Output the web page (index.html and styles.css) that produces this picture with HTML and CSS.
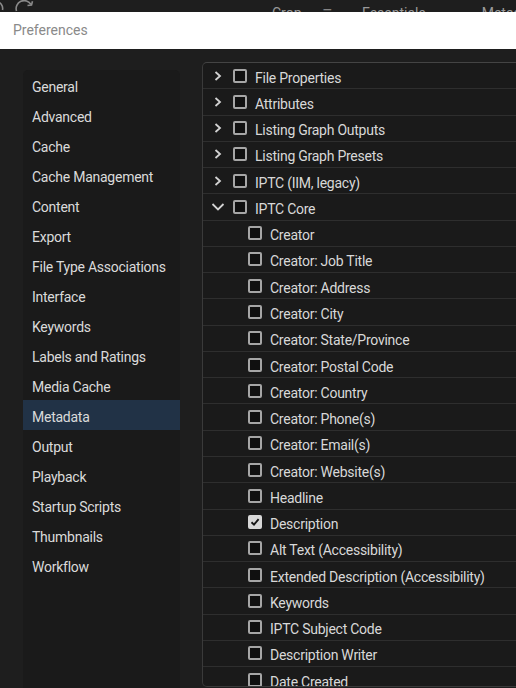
FILE: index.html
```html
<!DOCTYPE html>
<html lang="en">
<head>
<meta charset="utf-8">
<title>Preferences</title>
<link rel="stylesheet" href="styles.css">
</head>
<body>
<div class="topstrip">
  <svg class="undo" width="40" height="12" viewBox="0 0 40 12">
    <path d="M-4 1.5 A7 7 0 0 1 2.5 10" fill="none" stroke="#8a8a8a" stroke-width="1.6"/>
    <path d="M16.5 11 A8 8 0 0 1 31 4.5" fill="none" stroke="#8a8a8a" stroke-width="1.6"/>
    <path d="M27.5 5.5 L31.5 5 L32.5 1.2" fill="none" stroke="#8a8a8a" stroke-width="1.6"/>
  </svg>
  <span class="tool t-crop">Crop</span>
  <span class="tool t-menu">≡</span>
  <span class="tool t-ess">Essentials</span>
  <span class="tool t-meta">Metadata</span>
</div>
<div class="titlebar">Preferences</div>
<div class="main">
  <nav class="sidebar">
    <div class="nav-item">General</div>
    <div class="nav-item">Advanced</div>
    <div class="nav-item">Cache</div>
    <div class="nav-item">Cache Management</div>
    <div class="nav-item">Content</div>
    <div class="nav-item">Export</div>
    <div class="nav-item">File Type Associations</div>
    <div class="nav-item">Interface</div>
    <div class="nav-item">Keywords</div>
    <div class="nav-item">Labels and Ratings</div>
    <div class="nav-item">Media Cache</div>
    <div class="nav-item selected">Metadata</div>
    <div class="nav-item">Output</div>
    <div class="nav-item">Playback</div>
    <div class="nav-item">Startup Scripts</div>
    <div class="nav-item">Thumbnails</div>
    <div class="nav-item">Workflow</div>
  </nav>
  <div class="listpanel">
    <div class="row"><span class="chev"><svg width="8" height="10" viewBox="0 0 8 10"><path d="M1.5 1 L6 5 L1.5 9" fill="none" stroke="#d2d2d2" stroke-width="1.8"/></svg></span><span class="cb"></span><span class="label">File Properties</span></div>
    <div class="row"><span class="chev"><svg width="8" height="10" viewBox="0 0 8 10"><path d="M1.5 1 L6 5 L1.5 9" fill="none" stroke="#d2d2d2" stroke-width="1.8"/></svg></span><span class="cb"></span><span class="label">Attributes</span></div>
    <div class="row"><span class="chev"><svg width="8" height="10" viewBox="0 0 8 10"><path d="M1.5 1 L6 5 L1.5 9" fill="none" stroke="#d2d2d2" stroke-width="1.8"/></svg></span><span class="cb"></span><span class="label">Listing Graph Outputs</span></div>
    <div class="row"><span class="chev"><svg width="8" height="10" viewBox="0 0 8 10"><path d="M1.5 1 L6 5 L1.5 9" fill="none" stroke="#d2d2d2" stroke-width="1.8"/></svg></span><span class="cb"></span><span class="label">Listing Graph Presets</span></div>
    <div class="row"><span class="chev"><svg width="8" height="10" viewBox="0 0 8 10"><path d="M1.5 1 L6 5 L1.5 9" fill="none" stroke="#d2d2d2" stroke-width="1.8"/></svg></span><span class="cb"></span><span class="label">IPTC (IIM, legacy)</span></div>
    <div class="row"><span class="chev"><svg width="14" height="8" viewBox="0 0 14 8"><path d="M1.5 1 L7 6.5 L12.5 1" fill="none" stroke="#d2d2d2" stroke-width="1.8"/></svg></span><span class="cb"></span><span class="label">IPTC Core</span></div>
    <div class="row child"><span class="cb"></span><span class="label">Creator</span></div>
    <div class="row child"><span class="cb"></span><span class="label">Creator: Job Title</span></div>
    <div class="row child"><span class="cb"></span><span class="label">Creator: Address</span></div>
    <div class="row child"><span class="cb"></span><span class="label">Creator: City</span></div>
    <div class="row child"><span class="cb"></span><span class="label">Creator: State/Province</span></div>
    <div class="row child"><span class="cb"></span><span class="label">Creator: Postal Code</span></div>
    <div class="row child"><span class="cb"></span><span class="label">Creator: Country</span></div>
    <div class="row child"><span class="cb"></span><span class="label">Creator: Phone(s)</span></div>
    <div class="row child"><span class="cb"></span><span class="label">Creator: Email(s)</span></div>
    <div class="row child"><span class="cb"></span><span class="label">Creator: Website(s)</span></div>
    <div class="row child"><span class="cb"></span><span class="label">Headline</span></div>
    <div class="row child"><span class="cb checked"><svg width="10" height="10" viewBox="0 0 10 10"><path d="M1.5 5.2 L4 7.6 L8.6 2.2" fill="none" stroke="#151515" stroke-width="1.9"/></svg></span><span class="label">Description</span></div>
    <div class="row child"><span class="cb"></span><span class="label">Alt Text (Accessibility)</span></div>
    <div class="row child"><span class="cb"></span><span class="label">Extended Description (Accessibility)</span></div>
    <div class="row child"><span class="cb"></span><span class="label">Keywords</span></div>
    <div class="row child"><span class="cb"></span><span class="label">IPTC Subject Code</span></div>
    <div class="row child"><span class="cb"></span><span class="label">Description Writer</span></div>
    <div class="row child"><span class="cb"></span><span class="label">Date Created</span></div>
  </div>
</div>
</body>
</html>
```

FILE: styles.css
```css
html, body {
  margin: 0;
  padding: 0;
}
body {
  width: 516px;
  height: 688px;
  overflow: hidden;
  background: #1e1e1e;
  font-family: Roboto, "Noto Sans", sans-serif;
  font-size: 14px;
  color: #d8d8d8;
}
.topstrip {
  height: 12px;
  overflow: hidden;
  display: flex;
  align-items: flex-start;
  background: #1e1e1e;
  color: #9a9a9a;
  font-size: 14px;
  line-height: 16px;
}
.undo {
  flex: none;
}
.tool {
  flex: none;
  padding-top: 5px;
  white-space: nowrap;
}
.t-crop { margin-left: 232px; }
.t-menu { margin-left: 21px; font-size: 16px; }
.t-ess { margin-left: 30px; }
.t-meta { margin-left: 56px; }
.titlebar {
  height: 37px;
  background: #ffffff;
  color: #8a8a8a;
  font-size: 14px;
  line-height: 37px;
  padding-left: 13px;
}
.main {
  display: flex;
  align-items: flex-start;
  padding-left: 23px;
}
.sidebar {
  flex: none;
  width: 157px;
  margin-top: 21px;
  height: 640px;
  background: #1a1a1a;
  border-radius: 5px 5px 0 0;
}
.nav-item {
  height: 30px;
  line-height: 26px;
  padding-left: 9px;
  padding-top: 4px;
  box-sizing: border-box;
  white-space: nowrap;
  letter-spacing: -0.25px;
  color: #dadada;
}
.nav-item.selected {
  background: #213246;
}
.listpanel {
  flex: none;
  margin-left: 22px;
  margin-top: 13px;
  width: 340px;
  height: 625px;
  box-sizing: border-box;
  border: 1px solid #3a3a3a;
  border-top-color: #444444;
  border-radius: 5px;
  background: #1a1a1a;
  overflow: hidden;
}
.row {
  height: 26.27px;
  box-sizing: border-box;
  border-bottom: 1px solid #2e2e2e;
  display: flex;
  align-items: center;
  padding-left: 8px;
  white-space: nowrap;
}
.row.child {
  padding-left: 45px;
}
.chev {
  flex: none;
  width: 14px;
  height: 14px;
  display: flex;
  align-items: center;
  justify-content: center;
  margin-right: 8px;
}
.chev svg {
  display: block;
}
.cb {
  flex: none;
  width: 14px;
  height: 14px;
  box-sizing: border-box;
  border: 2px solid #a6a6a6;
  border-radius: 2px;
  background: #101010;
  margin-right: 8px;
  display: flex;
  align-items: center;
  justify-content: center;
}
.cb.checked {
  background: #d8d8d8;
  border-color: #d8d8d8;
}
.label {
  padding-top: 4px;
  letter-spacing: -0.25px;
  color: #d8d8d8;
}
```
